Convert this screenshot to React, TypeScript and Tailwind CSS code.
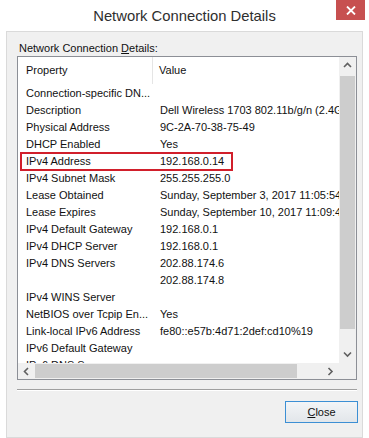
import React from "react";

const rows: [string, string][] = [
  ["Connection-specific DN...", ""],
  ["Description", "Dell Wireless 1703 802.11b/g/n (2.4GHz)"],
  ["Physical Address", "9C-2A-70-38-75-49"],
  ["DHCP Enabled", "Yes"],
  ["IPv4 Address", "192.168.0.14"],
  ["IPv4 Subnet Mask", "255.255.255.0"],
  ["Lease Obtained", "Sunday, September 3, 2017 11:05:54 AM"],
  ["Lease Expires", "Sunday, September 10, 2017 11:09:40 AM"],
  ["IPv4 Default Gateway", "192.168.0.1"],
  ["IPv4 DHCP Server", "192.168.0.1"],
  ["IPv4 DNS Servers", "202.88.174.6"],
  ["", "202.88.174.8"],
  ["IPv4 WINS Server", ""],
  ["NetBIOS over Tcpip En...", "Yes"],
  ["Link-local IPv6 Address", "fe80::e57b:4d71:2def:cd10%19"],
  ["IPv6 Default Gateway", ""],
  ["IPv6 DNS Server", ""],
];

function Chevron({ dir }: { dir: "up" | "down" | "left" | "right" }) {
  const pts = {
    up: "1,5 4.5,1.5 8,5",
    down: "1,1.5 4.5,5 8,1.5",
    left: "5,1 1.5,4.5 5,8",
    right: "1.5,1 5,4.5 1.5,8",
  }[dir];
  const vertical = dir === "up" || dir === "down";
  return (
    <svg
      width={vertical ? 9 : 7}
      height={vertical ? 7 : 9}
      viewBox={vertical ? "0 0 9 7" : "0 0 7 9"}
    >
      <polyline points={pts} fill="none" stroke="#606060" strokeWidth="1.6" />
    </svg>
  );
}

export default function App() {
  return (
    <div
      className="relative w-[369px] h-[438px] bg-white overflow-hidden text-[#111]"
      style={{ fontFamily: '"Liberation Sans", Arial, sans-serif' }}
    >
      {/* Title bar */}
      <div className="h-[31px] flex items-center justify-center text-[14.8px] text-[#2e2e2e] pt-[2px]">
        Network Connection Details
      </div>
      <div className="absolute top-0 right-[4px] w-[29px] h-[20px] bg-[#c75050] flex items-center justify-center">
        <svg width="10" height="9" viewBox="0 0 10 9">
          <path d="M1 0.5 L9 8.5 M9 0.5 L1 8.5" stroke="#fff" strokeWidth="1.8" />
        </svg>
      </div>

      {/* Client area */}
      <div className="ml-[6px] w-[357px] h-[407px] border border-[#dadada] bg-[#f0f0f0] text-[11px]">
        <div className="pl-[12px] pt-[9px] h-[24px] leading-[14px]">
          Network Connection <span className="underline">D</span>etails:
        </div>

        {/* List box */}
        <div className="ml-[10px] w-[340px] h-[324px] border border-[#8c8f96] bg-white flex flex-col">
          <div className="flex h-[306px]">
            {/* Data area */}
            <div className="w-[321px] h-[306px] overflow-hidden">
              <div className="h-[27px] flex items-center">
                <div className="w-[135px] pl-[8px] h-full flex items-center border-r border-[#e5e5e5]">
                  Property
                </div>
                <div className="pl-[6px]">Value</div>
              </div>
              <div className="pt-[1px]">
                {rows.map(([p, v], i) => (
                  <div key={i} className="relative h-[17px] flex items-center whitespace-nowrap">
                    <div className="w-[136px] pl-[8px] overflow-hidden">{p}</div>
                    <div className="pl-[6px] flex-1 overflow-hidden">{v}</div>
                    {p === "IPv4 Address" && (
                      <div className="absolute left-[2px] top-[-1px] w-[213px] h-[19px] border-2 border-[#d11f2b]" />
                    )}
                  </div>
                ))}
              </div>
            </div>
            {/* Vertical scrollbar */}
            <div className="w-[17px] h-full bg-[#f0f0f0] flex flex-col">
              <div className="h-[17px] flex items-center justify-center">
                <Chevron dir="up" />
              </div>
              <div className="mt-[2px] mx-[1px] h-[253px] bg-[#cdcdcd]" />
              <div className="flex-1" />
              <div className="h-[17px] flex items-center justify-center">
                <Chevron dir="down" />
              </div>
            </div>
          </div>
          {/* Horizontal scrollbar */}
          <div className="flex h-[16px]">
            <div className="w-[321px] h-full bg-[#f0f0f0] flex">
              <div className="w-[17px] h-full flex items-center justify-center">
                <Chevron dir="left" />
              </div>
              <div className="my-[1px] w-[262px] bg-[#cdcdcd]" />
              <div className="flex-1" />
              <div className="w-[17px] h-full flex items-center justify-center">
                <Chevron dir="right" />
              </div>
            </div>
            <div className="w-[17px] h-full bg-[#f0f0f0]" />
          </div>
        </div>

        {/* Separator */}
        <div className="ml-[10px] mt-[9px] w-[340px] h-[2px] border-t border-[#a0a0a0] border-b border-b-white" />

        {/* Button */}
        <div className="flex justify-end pr-[4px] mt-[10px]">
          <div className="w-[73px] h-[22px] border border-[#3c8fd4] bg-gradient-to-b from-[#f3f5f7] to-[#e2e6ea] flex items-center justify-center">
            <span>
              <span className="underline">C</span>lose
            </span>
          </div>
        </div>
      </div>
    </div>
  );
}
